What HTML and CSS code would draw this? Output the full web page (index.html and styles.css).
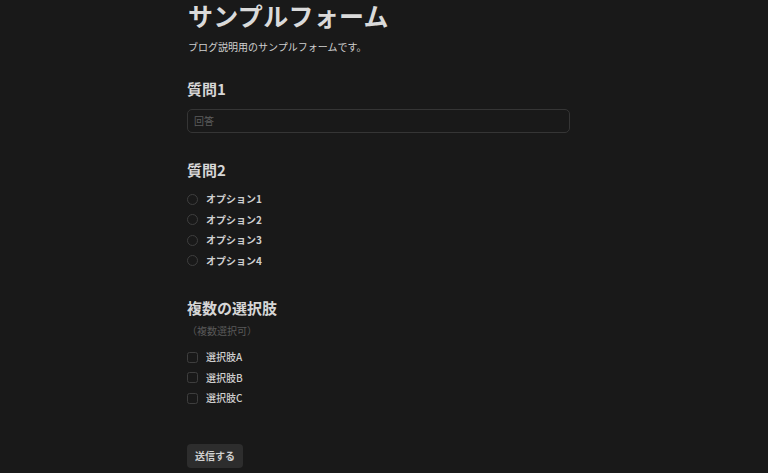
FILE: index.html
```html
<!DOCTYPE html>
<html lang="ja">
<head>
<meta charset="utf-8">
<title>サンプルフォーム</title>
<link rel="stylesheet" href="styles.css">
</head>
<body>
<main class="form">
  <h1 class="title">サンプルフォーム</h1>
  <p class="desc">ブログ説明用のサンプルフォームです。</p>

  <section class="q q-first">
    <h2 class="q-title">質問1</h2>
    <div class="input">回答</div>
  </section>

  <section class="q">
    <h2 class="q-title">質問2</h2>
    <ul class="options">
      <li class="opt"><span class="radio"></span><span class="opt-label bold">オプション1</span></li>
      <li class="opt"><span class="radio"></span><span class="opt-label bold">オプション2</span></li>
      <li class="opt"><span class="radio"></span><span class="opt-label bold">オプション3</span></li>
      <li class="opt"><span class="radio"></span><span class="opt-label bold">オプション4</span></li>
    </ul>
  </section>

  <section class="q">
    <h2 class="q-title">複数の選択肢</h2>
    <p class="hint">（複数選択可）</p>
    <ul class="options checks">
      <li class="opt"><span class="check"></span><span class="opt-label">選択肢A</span></li>
      <li class="opt"><span class="check"></span><span class="opt-label">選択肢B</span></li>
      <li class="opt"><span class="check"></span><span class="opt-label">選択肢C</span></li>
    </ul>
  </section>

  <button class="submit" type="button">送信する</button>
</main>
</body>
</html>
```

FILE: styles.css
```css
html, body {
  margin: 0;
  padding: 0;
  background: #191919;
}
body {
  font-family: "Noto Sans CJK JP", "Noto Sans", sans-serif;
  color: #d4d4d4;
}
.form {
  margin-left: 187px;
  width: 383px;
  display: flex;
  flex-direction: column;
  padding-bottom: 4px;
}
.title {
  margin: 0;
  font-size: 25px;
  line-height: 30px;
  font-weight: 700;
  color: #dadada;
  padding-left: 1px;
  letter-spacing: 0.3px;
}
.desc {
  margin: 9px 0 0;
  font-size: 10px;
  line-height: 16px;
  padding-left: 1px;
  color: #d0d0d0;
}
.q {
  margin-top: 27px;
  display: flex;
  flex-direction: column;
}
.q-first {
  margin-top: 24px;
}
.q-title {
  margin: 0;
  font-size: 15px;
  line-height: 20px;
  font-weight: 700;
  color: #d6d6d6;
}
.input {
  margin-top: 10px;
  height: 24px;
  box-sizing: border-box;
  border: 1.5px solid #353535;
  border-radius: 5px;
  font-size: 10px;
  line-height: 21px;
  padding-left: 6px;
  color: #5c5c5c;
}
.options {
  list-style: none;
  margin: 9px 0 0;
  padding: 0;
}
.checks {
  margin-top: 8px;
}
.opt {
  height: 20.5px;
  display: flex;
  align-items: center;
}
.radio {
  width: 11px;
  height: 11px;
  box-sizing: border-box;
  border: 1.5px solid #3e3e3e;
  border-radius: 50%;
  flex: none;
}
.check {
  width: 11px;
  height: 11px;
  box-sizing: border-box;
  border: 1.5px solid #3e3e3e;
  border-radius: 2.5px;
  flex: none;
}
.opt-label {
  margin-left: 8px;
  font-size: 10px;
  line-height: 14px;
  color: #cfcfcf;
}
.bold {
  font-weight: 700;
}
.checks .opt-label {
  font-weight: 500;
}
.hint {
  margin: 5px 0 0;
  font-size: 10px;
  line-height: 16px;
  color: #5a5a5a;
}
.submit {
  align-self: flex-start;
  margin-top: 35px;
  width: 56px;
  height: 24px;
  border: none;
  border-radius: 4px;
  background: #2d2d2d;
  color: #d0d0d0;
  font-family: "Noto Sans CJK JP", "Noto Sans", sans-serif;
  font-size: 10px;
  font-weight: 700;
  padding: 0;
}
```
